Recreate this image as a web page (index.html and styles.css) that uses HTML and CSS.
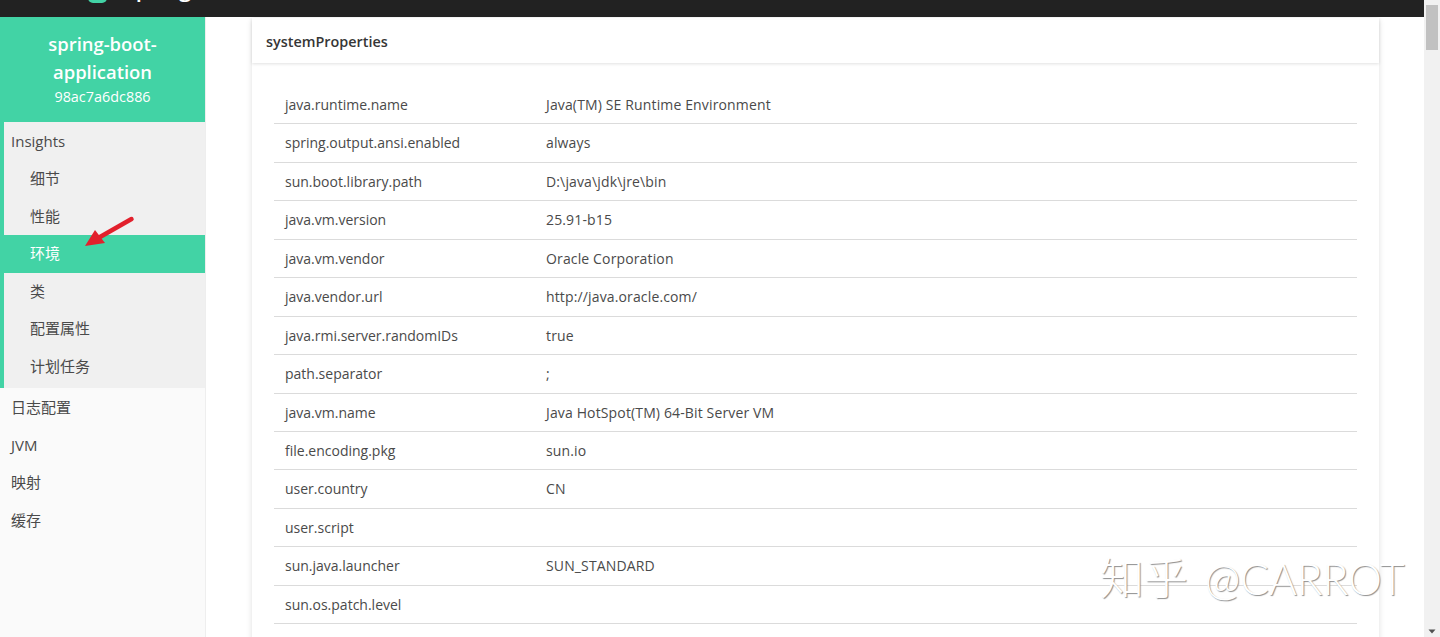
FILE: index.html
```html
<!DOCTYPE html>
<html lang="zh">
<head>
<meta charset="utf-8">
<title>systemProperties</title>
<link rel="stylesheet" href="styles.css">
</head>
<body>
<div class="page">
  <div class="app">
    <header class="navbar">
      <span class="logo-mark"></span>
      <span class="logo-text">spring</span>
    </header>
    <div class="layout">
      <aside class="sidebar">
        <div class="instance">
          <div class="instance-name">spring-boot-application</div>
          <div class="instance-id">98ac7a6dc886</div>
        </div>
        <nav class="group">
          <div class="item head">Insights</div>
          <div class="item sub">细节</div>
          <div class="item sub">性能</div>
          <div class="item sub active">环境</div>
          <div class="item sub">类</div>
          <div class="item sub">配置属性</div>
          <div class="item sub">计划任务</div>
        </nav>
        <nav class="rest">
          <div class="item">日志配置</div>
          <div class="item">JVM</div>
          <div class="item">映射</div>
          <div class="item">缓存</div>
        </nav>
      </aside>
      <main class="main">
        <section class="card">
          <h2 class="card-title">systemProperties</h2>
          <div class="card-body">
            <div class="row"><span class="key">java.runtime.name</span><span class="val">Java(TM) SE Runtime Environment</span></div>
            <div class="row"><span class="key">spring.output.ansi.enabled</span><span class="val">always</span></div>
            <div class="row"><span class="key">sun.boot.library.path</span><span class="val">D:\java\jdk\jre\bin</span></div>
            <div class="row"><span class="key">java.vm.version</span><span class="val">25.91-b15</span></div>
            <div class="row"><span class="key">java.vm.vendor</span><span class="val">Oracle Corporation</span></div>
            <div class="row"><span class="key">java.vendor.url</span><span class="val">http://java.oracle.com/</span></div>
            <div class="row"><span class="key">java.rmi.server.randomIDs</span><span class="val">true</span></div>
            <div class="row"><span class="key">path.separator</span><span class="val">;</span></div>
            <div class="row"><span class="key">java.vm.name</span><span class="val">Java HotSpot(TM) 64-Bit Server VM</span></div>
            <div class="row"><span class="key">file.encoding.pkg</span><span class="val">sun.io</span></div>
            <div class="row"><span class="key">user.country</span><span class="val">CN</span></div>
            <div class="row"><span class="key">user.script</span><span class="val"></span></div>
            <div class="row"><span class="key">sun.java.launcher</span><span class="val">SUN_STANDARD</span></div>
            <div class="row"><span class="key">sun.os.patch.level</span><span class="val"></span></div>
          </div>
        </section>
      </main>
    </div>
  </div>
  <div class="scrollbar">
    <div class="thumb"></div>
    <svg class="scroll-arrow" width="8" height="5" viewBox="0 0 8 5"><path d="M0.5 0.5h7L4 4.5z" fill="#505050"/></svg>
  </div>
</div>
<svg class="arrow" width="56" height="36" viewBox="0 0 56 36">
  <path d="M47.5 4 L16 22" stroke="#e2202c" stroke-width="4.5" stroke-linecap="round" fill="none"/>
  <path d="M1 31 L11 15 L21 28z" fill="#e2202c"/>
</svg>
<div class="watermark">知乎<span class="watermark-name">@CARROT</span></div>
</body>
</html>
```

FILE: styles.css
```css
* { box-sizing: border-box; }
html, body { margin: 0; height: 100%; overflow: hidden; }
body {
  font-family: "Open Sans", "Noto Sans CJK SC", sans-serif;
  font-size: 14px;
  color: #4a4a4a;
  background: #fff;
}
.page { display: flex; height: 637px; }
.app { flex: 1; min-width: 0; display: flex; flex-direction: column; }
.navbar {
  height: 17px;
  flex: none;
  background: #222;
  overflow: hidden;
  display: flex;
  align-items: flex-end;
  padding-left: 88px;
}
.logo-mark {
  width: 19px;
  height: 20px;
  margin-bottom: 14px;
  background: #42d3a5;
  border-radius: 5px;
  flex: none;
}
.logo-text {
  margin-left: 18px;
  margin-bottom: 18px;
  font-size: 22px;
  line-height: 22px;
  color: #fff;
  font-weight: 600;
}
.layout { flex: 1; min-height: 0; display: flex; }
.sidebar {
  width: 206px;
  flex: none;
  background: #fafafa;
  border-right: 1px solid #eee;
  font-size: 15px;
}
.instance {
  height: 105px;
  padding: 13px 20px 0;
  background: #42d3a5;
  color: #fff;
  text-align: center;
}
.instance-name { font-size: 18.4px; line-height: 28px; font-weight: 600; }
.instance-id { font-size: 14.4px; line-height: 22px; }
.group {
  background: #f0f0f0;
  border-left: 4px solid #42d3a5;
  height: 266px;
}
.item {
  height: 37.5px;
  line-height: 37.5px;
  padding-left: 7px;
}
.head { height: 38px; line-height: 39px; }
.sub { padding-left: 26px; }
.active {
  background: #42d3a5;
  color: #fff;
}
.rest { padding-top: 1px; }
.rest .item { padding-left: 11px; }
.main {
  flex: 1;
  min-width: 0;
  padding: 1px 45px 0 46px;
  background: #fff;
  overflow: hidden;
}
.card {
  background: #fff;
  box-shadow: 0 2px 6px rgba(10, 10, 10, 0.13);
  min-height: 700px;
}
.card-title {
  margin: 0;
  height: 45px;
  padding-left: 14px;
  font-size: 14.4px;
  line-height: 47px;
  font-weight: 600;
  color: #363636;
  box-shadow: 0 1px 3px rgba(10, 10, 10, 0.12);
}
.card-body { padding: 23px 22px 0; }
.row {
  display: grid;
  grid-template-columns: 272px 1fr;
  height: 38.45px;
  line-height: 38px;
  border-bottom: 1px solid #dbdbdb;
  white-space: pre;
}
.key { padding-left: 11px; }
.val { letter-spacing: 0.14px; }
.scrollbar {
  width: 16px;
  flex: none;
  background: #f1f1f1;
  position: relative;
  padding: 5px 2px 0;
}
.thumb { height: 45px; background: #c1c1c1; }
.scroll-arrow { position: absolute; left: 4px; bottom: 3px; }
.arrow { position: absolute; left: 84px; top: 215px; }
.watermark {
  position: absolute;
  left: 1100px;
  top: 548px;
  font-family: "Lato", "Noto Sans CJK SC", sans-serif;
  font-size: 44px;
  line-height: 60px;
  font-weight: 300;
  white-space: nowrap;
  color: #fff;
  text-shadow: 1px 1px 1px #8f8f8f;
}
.watermark-name { margin-left: 17px; font-size: 42.5px; }
```
